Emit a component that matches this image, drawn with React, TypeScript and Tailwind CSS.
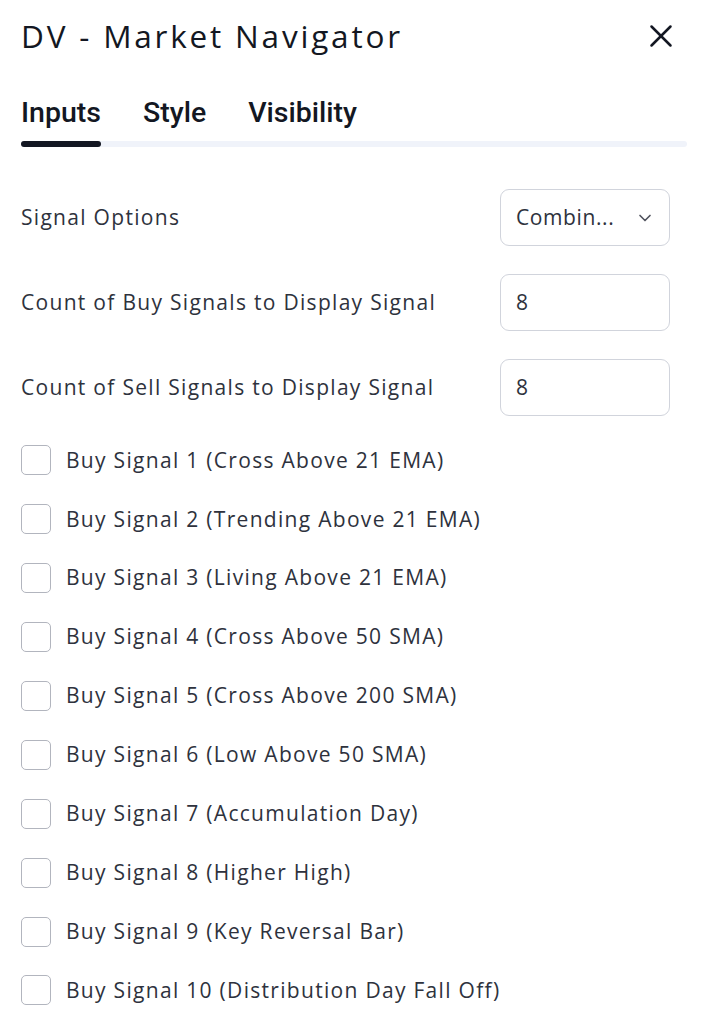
import { X, ChevronDown } from 'lucide-react';

const signals = [
  'Buy Signal 1 (Cross Above 21 EMA)',
  'Buy Signal 2 (Trending Above 21 EMA)',
  'Buy Signal 3 (Living Above 21 EMA)',
  'Buy Signal 4 (Cross Above 50 SMA)',
  'Buy Signal 5 (Cross Above 200 SMA)',
  'Buy Signal 6 (Low Above 50 SMA)',
  'Buy Signal 7 (Accumulation Day)',
  'Buy Signal 8 (Higher High)',
  'Buy Signal 9 (Key Reversal Bar)',
  'Buy Signal 10 (Distribution Day Fall Off)',
];

const App = () => {
  return (
    <div className="w-[706px] h-[1024px] overflow-hidden bg-white text-[#131722] font-['Open_Sans',sans-serif]">
      <div className="flex items-center justify-between pl-[21px] pr-[26px] h-[72px]">
        <h1 className="text-[31.5px] font-normal tracking-[2.8px]">DV - Market Navigator</h1>
        <X size={38} strokeWidth={1.6} />
      </div>

      <div className="px-[21px] mt-[24px]">
        <div className="flex gap-[42px] font-['Roboto',sans-serif] font-medium text-[28.5px] leading-[34px]">
          <span>Inputs</span>
          <span>Style</span>
          <span>Visibility</span>
        </div>
        <div className="mt-[11px] h-[6px] rounded-full bg-[#f0f3fa] mr-[-2px]">
          <div className="h-[6px] w-[80px] rounded-full bg-[#131722]" />
        </div>
      </div>

      <div className="px-[21px] mt-[42px] text-[21px] text-[#2e323d] tracking-[1.3px]">
        <div className="flex items-center justify-between pr-[15px]">
          <span>Signal Options</span>
          <div className="w-[170px] h-[57px] border border-[#d1d4dc] rounded-[9px] flex items-center justify-between pl-[15px] pr-[14px] tracking-[0.6px]">
            <span>Combin...</span>
            <ChevronDown size={20} className="text-[#50535e]" />
          </div>
        </div>
        <div className="flex items-center justify-between pr-[15px] mt-[28px]">
          <span>Count of Buy Signals to Display Signal</span>
          <div className="w-[170px] h-[57px] border border-[#d1d4dc] rounded-[9px] flex items-center pl-[15px]">8</div>
        </div>
        <div className="flex items-center justify-between pr-[15px] mt-[28px]">
          <span>Count of Sell Signals to Display Signal</span>
          <div className="w-[170px] h-[57px] border border-[#d1d4dc] rounded-[9px] flex items-center pl-[15px]">8</div>
        </div>

        <div className="mt-[15px] flex flex-col">
          {signals.map((s) => (
            <div key={s} className="flex items-center h-[58.9px] gap-[15px]">
              <div className="w-[30px] h-[30px] border-[1.5px] border-[#b2b5be] rounded-[5px]" />
              <span>{s}</span>
            </div>
          ))}
        </div>
      </div>
    </div>
  );
};

export default App;
